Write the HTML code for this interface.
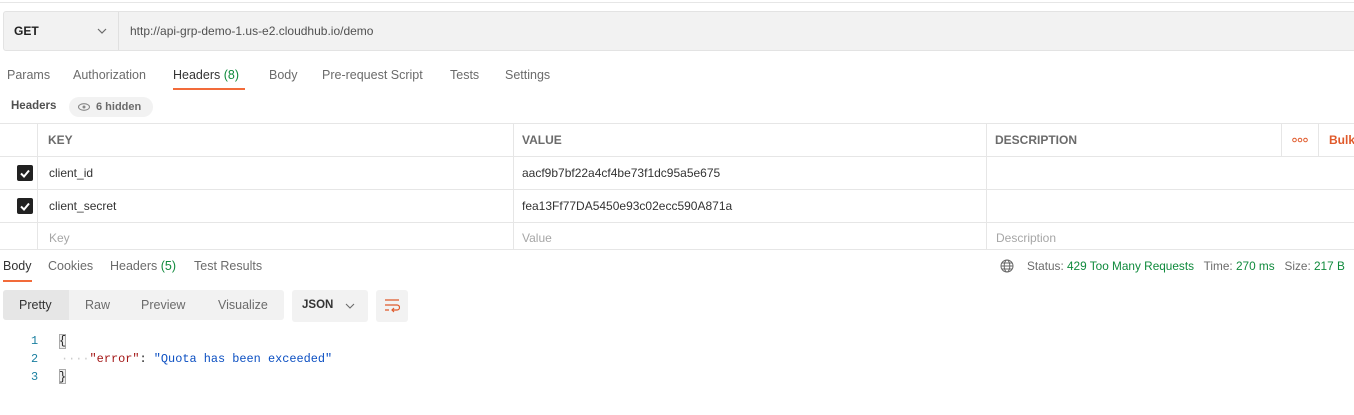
<!DOCTYPE html>
<html><head><style>
*{box-sizing:border-box;margin:0;padding:0}
body{width:1354px;height:415px;background:#fff;font-family:"Liberation Sans",sans-serif;font-size:12px;color:#212121;position:relative;overflow:hidden}
.a{position:absolute;white-space:nowrap}
.g{color:#6b6b6b}
.grn{color:#0f8a3c}
.hl{position:absolute;height:1px;background:#e6e6e6}
.vl{position:absolute;width:1px;background:#e6e6e6}
.cb{position:absolute;width:16px;height:16px;background:#212121;border-radius:2px}
.mono{font-family:"Liberation Mono",monospace;font-size:11.9px}
</style></head><body>
<div class="hl" style="left:0;top:2px;width:1354px"></div>
<div class="a" style="left:3px;top:11px;width:1360px;height:40px;background:#f2f2f2;border:1px solid #e3e3e3;border-radius:3px"></div>
<div class="vl" style="left:118px;top:12px;height:38px;background:#e0e0e0"></div>
<div class="a" style="left:14px;top:24px;font-weight:bold;color:#212121">GET</div>
<svg class="a" style="left:97px;top:27px" width="10" height="8"><path d="M1 2l4 4 4-4" fill="none" stroke="#6b6b6b" stroke-width="1.2"/></svg>
<div class="a" style="left:130px;top:24px;color:#505050">http://api-grp-demo-1.us-e2.cloudhub.io/demo</div>

<div class="a g" style="left:7px;top:68px;font-size:12.5px">Params</div>
<div class="a g" style="left:73px;top:68px;font-size:12.5px">Authorization</div>
<div class="a" style="left:173px;top:68px;font-size:12.5px;color:#333">Headers <span class="grn">(8)</span></div>
<div class="a" style="left:173px;top:88px;width:72px;height:2px;background:#f26b3a"></div>
<div class="a g" style="left:269px;top:68px;font-size:12.5px">Body</div>
<div class="a g" style="left:322px;top:68px;font-size:12.5px">Pre-request Script</div>
<div class="a g" style="left:450px;top:68px;font-size:12.5px">Tests</div>
<div class="a g" style="left:505px;top:68px;font-size:12.5px">Settings</div>

<div class="a" style="left:11px;top:100px;color:#505050;font-weight:bold;font-size:11.5px">Headers</div>
<div class="a" style="left:69px;top:97px;width:84px;height:20px;background:#f2f2f2;border-radius:10px"></div>
<svg class="a" style="left:78px;top:103px" width="12" height="8"><ellipse cx="6" cy="4" rx="5.5" ry="3.3" fill="none" stroke="#888" stroke-width="1.1"/><circle cx="6" cy="4" r="1.5" fill="#888"/></svg>
<div class="a" style="left:96px;top:101px;font-size:11px;font-weight:bold;color:#6b6b6b">6 hidden</div>

<div class="hl" style="left:0;top:123px;width:1354px"></div>
<div class="hl" style="left:0;top:156px;width:1354px"></div>
<div class="hl" style="left:0;top:189px;width:1354px"></div>
<div class="hl" style="left:0;top:222px;width:1354px"></div>
<div class="hl" style="left:0;top:249px;width:1354px"></div>
<div class="vl" style="left:37px;top:123px;height:126px"></div>
<div class="vl" style="left:513px;top:123px;height:126px"></div>
<div class="vl" style="left:986px;top:123px;height:126px"></div>
<div class="vl" style="left:1281px;top:123px;height:33px"></div>
<div class="vl" style="left:1318px;top:123px;height:33px"></div>
<div class="a g" style="left:48px;top:133px;font-weight:bold;font-size:12px">KEY</div>
<div class="a g" style="left:522px;top:133px;font-weight:bold;font-size:12px">VALUE</div>
<div class="a g" style="left:995px;top:133px;font-weight:bold;font-size:12px">DESCRIPTION</div>
<svg class="a" style="left:1292px;top:137px" width="16" height="6"><g fill="none" stroke="#e05a2b" stroke-width="1"><circle cx="2.5" cy="3" r="1.8"/><circle cx="8" cy="3" r="1.8"/><circle cx="13.5" cy="3" r="1.8"/></g></svg>
<div class="a" style="left:1329px;top:133px;color:#e05a2b;font-weight:bold">Bulk</div>

<div class="cb" style="left:17px;top:165px"></div>
<svg class="a" style="left:17px;top:165px" width="16" height="16"><path d="M4 8.5l3 3 5-6" fill="none" stroke="#fff" stroke-width="2"/></svg>
<div class="a" style="left:49px;top:166px;color:#333">client_id</div>
<div class="a" style="left:522px;top:166px;color:#333">aacf9b7bf22a4cf4be73f1dc95a5e675</div>
<div class="cb" style="left:17px;top:198px"></div>
<svg class="a" style="left:17px;top:198px" width="16" height="16"><path d="M4 8.5l3 3 5-6" fill="none" stroke="#fff" stroke-width="2"/></svg>
<div class="a" style="left:49px;top:199px;color:#333">client_secret</div>
<div class="a" style="left:522px;top:199px;color:#333">fea13Ff77DA5450e93c02ecc590A871a</div>
<div class="a" style="left:49px;top:231px;color:#a6a6a6">Key</div>
<div class="a" style="left:522px;top:231px;color:#a6a6a6">Value</div>
<div class="a" style="left:996px;top:231px;color:#a6a6a6">Description</div>

<div class="a" style="left:3px;top:259px;color:#333;font-size:12.5px">Body</div>
<div class="a" style="left:3px;top:280px;width:29px;height:2px;background:#f26b3a"></div>
<div class="a g" style="left:48px;top:259px;font-size:12.5px">Cookies</div>
<div class="a g" style="left:110px;top:259px;font-size:12.5px">Headers <span class="grn">(5)</span></div>
<div class="a g" style="left:194px;top:259px;font-size:12.5px">Test Results</div>
<svg class="a" style="left:1000px;top:259px" width="14" height="14"><g fill="none" stroke="#666" stroke-width="1"><circle cx="7" cy="7" r="6"/><ellipse cx="7" cy="7" rx="2.8" ry="6"/><path d="M1 7h12M2 4h10M2 10h10"/></g></svg>
<div class="a" style="left:1027px;top:259px;font-size:11.8px;color:#6b6b6b">Status: <span class="grn">429 Too Many Requests</span>&nbsp;&nbsp; Time: <span class="grn">270 ms</span>&nbsp;&nbsp; Size: <span class="grn">217 B</span></div>

<div class="a" style="left:3px;top:290px;width:281px;height:30px;background:#f2f2f2;border-radius:3px"></div>
<div class="a" style="left:3px;top:290px;width:66px;height:30px;background:#e6e6e6;border-radius:3px 0 0 3px"></div>
<div class="a" style="left:19px;top:298px;color:#333;font-size:12.5px">Pretty</div>
<div class="a g" style="left:85px;top:298px;font-size:12.5px">Raw</div>
<div class="a g" style="left:141px;top:298px;font-size:12.5px">Preview</div>
<div class="a g" style="left:218px;top:298px;font-size:12.5px">Visualize</div>
<div class="a" style="left:292px;top:290px;width:76px;height:32px;background:#f2f2f2;border-radius:3px"></div>
<div class="a" style="left:302px;top:299px;font-weight:bold;font-size:11.5px;color:#333">JSON</div>
<svg class="a" style="left:345px;top:302px" width="10" height="8"><path d="M1 2l4 4 4-4" fill="none" stroke="#6b6b6b" stroke-width="1.1"/></svg>
<div class="a" style="left:376px;top:290px;width:32px;height:32px;background:#f2f2f2;border-radius:3px"></div>
<svg class="a" style="left:384px;top:298px" width="16" height="16"><g fill="none" stroke="#e05a2b" stroke-width="1.2"><path d="M1 2h14M1 7h12a2.5 2.5 0 0 1 0 5H8M10 10l-2 2 2 2M1 12h4"/></g></svg>

<div class="a mono" style="left:31px;top:334px;color:#1a7fa0">1</div>
<div class="a mono" style="left:31px;top:352px;color:#1a7fa0">2</div>
<div class="a mono" style="left:31px;top:370px;color:#1a7fa0">3</div>
<div class="a" style="left:59px;top:334px;width:7px;height:15px;border:1px solid #aaa;background:#eee"></div>
<div class="a mono" style="left:59px;top:334px">{</div>
<div class="a mono" style="left:61px;top:352px"><span style="color:#ccc">····</span><span style="color:#a31515">"error"</span>: <span style="color:#0b4fc2">"Quota has been exceeded"</span></div>
<div class="a" style="left:59px;top:369px;width:7px;height:15px;border:1px solid #aaa;background:#eee"></div>
<div class="a mono" style="left:59px;top:370px">}</div>
</body></html>
